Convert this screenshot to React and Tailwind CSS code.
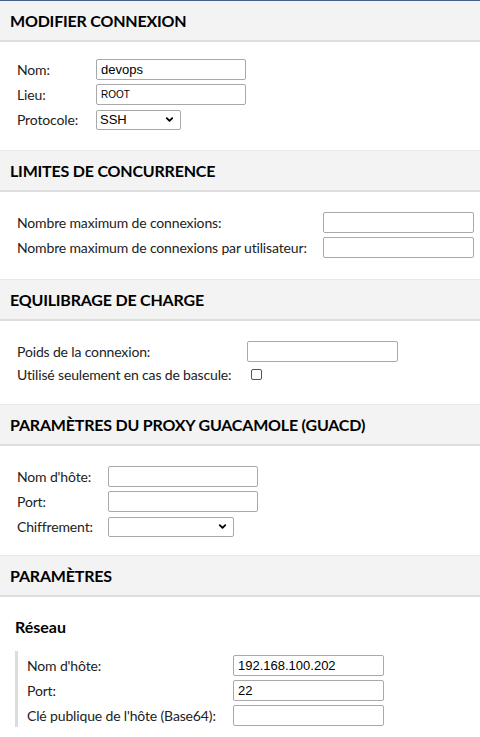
import { ChevronDown } from 'lucide-react'

const labelFont = { fontFamily: 'Lato, "Noto Sans", sans-serif' }

function SectionHeader({ title, first }) {
    return (
        <div
            className={`flex h-[42px] items-center border-b-2 border-[#dedede] bg-[#f3f3f3] px-[10px] ${first ? 'border-t border-t-[#4a5f88]' : 'border-t border-t-[#e8e8e8]'}`}
        >
            <h2 className="text-[16px] font-bold tracking-[-0.2px] text-black">
                {title}
            </h2>
        </div>
    )
}

function TextField({ value = '', small, width = 'w-[151px]' }) {
    return (
        <div
            className={`flex h-[21px] shrink-0 ${width} items-center rounded-[2px] border border-[#a9a9a9] bg-white px-[4px] ${small ? 'text-[10px]' : 'text-[13px]'} text-black`}
            style={{ fontFamily: '"Liberation Sans", Arial, sans-serif' }}
        >
            {value}
        </div>
    )
}

function SelectField({ value = '', width }) {
    return (
        <div
            className={`flex h-[20px] shrink-0 ${width} items-center justify-between rounded-[2px] border border-[#a9a9a9] bg-white pl-[3px] pr-[5px] text-[13px] text-black`}
            style={{ fontFamily: '"Liberation Sans", Arial, sans-serif' }}
        >
            <span>{value}</span>
            <ChevronDown size={11} strokeWidth={4} />
        </div>
    )
}

function Row({ label, labelWidth, children }) {
    return (
        <div className="flex h-[21px] items-center">
            <span
                className="shrink-0 text-[14px] tracking-[-0.15px] text-[#222]"
                style={{ width: labelWidth }}
            >
                {label}
            </span>
            {children}
        </div>
    )
}

export default function App() {
    return (
        <div className="h-[737px] w-[480px] overflow-hidden bg-white" style={labelFont}>

            <SectionHeader title="MODIFIER CONNEXION" first />
            <div className="flex flex-col gap-[4px] px-[17px] pt-[17px] pb-[20px]">
                <Row label="Nom:" labelWidth={79}>
                    <TextField value="devops" width="w-[150px]" />
                </Row>
                <Row label="Lieu:" labelWidth={79}>
                    <TextField value="ROOT" small width="w-[150px]" />
                </Row>
                <Row label="Protocole:" labelWidth={79}>
                    <SelectField value="SSH" width="w-[85px]" />
                </Row>
            </div>

            <SectionHeader title="LIMITES DE CONCURRENCE" />
            <div className="flex flex-col gap-[4px] px-[17px] pt-[20px] pb-[21px]">
                <Row label="Nombre maximum de connexions:" labelWidth={306}>
                    <TextField />
                </Row>
                <Row label="Nombre maximum de connexions par utilisateur:" labelWidth={306}>
                    <TextField />
                </Row>
            </div>

            <SectionHeader title="EQUILIBRAGE DE CHARGE" />
            <div className="flex flex-col gap-[2px] px-[17px] pt-[20px] pb-[19px]">
                <Row label="Poids de la connexion:" labelWidth={230}>
                    <TextField />
                </Row>
                <Row label="Utilisé seulement en cas de bascule:" labelWidth={234}>
                    <span className="h-[11px] w-[11px] rounded-[2px] border border-[#555]" />
                </Row>
            </div>

            <SectionHeader title="PARAMÈTRES DU PROXY GUACAMOLE (GUACD)" />
            <div className="flex flex-col gap-[4px] px-[17px] pt-[20px] pb-[18px]">
                <Row label="Nom d'hôte:" labelWidth={91}>
                    <TextField width="w-[150px]" />
                </Row>
                <Row label="Port:" labelWidth={91}>
                    <TextField width="w-[150px]" />
                </Row>
                <Row label="Chiffrement:" labelWidth={91}>
                    <SelectField width="w-[126px]" />
                </Row>
            </div>

            <SectionHeader title="PARAMÈTRES" />
            <div className="px-[15px] pt-[20px]">
                <h3 className="text-[16px] font-bold leading-[20px] text-black">
                    Réseau
                </h3>
                <div className="mt-[14px] flex flex-col gap-[4px] border-l-[3px] border-[#dcdcdc] pl-[9px] pt-[4px] pb-[1px]">
                    <Row label="Nom d'hôte:" labelWidth={206}>
                        <TextField value="192.168.100.202" />
                    </Row>
                    <Row label="Port:" labelWidth={206}>
                        <TextField value="22" />
                    </Row>
                    <Row label="Clé publique de l'hôte (Base64):" labelWidth={206}>
                        <TextField />
                    </Row>
                </div>
            </div>
        </div>
    )
}
